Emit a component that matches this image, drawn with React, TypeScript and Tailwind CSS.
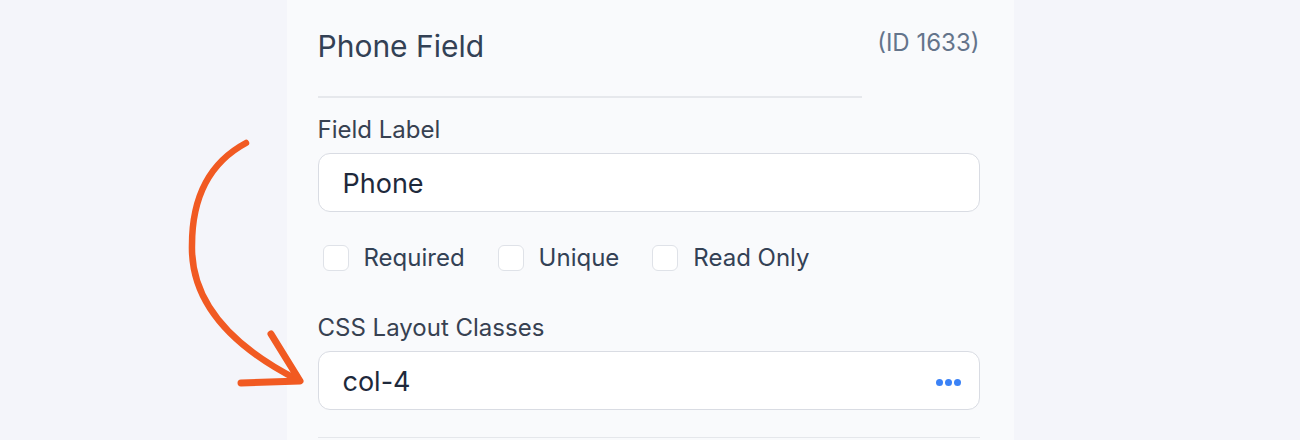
import React from 'react';

const Checkbox: React.FC<{ label: string }> = ({ label }) => (
    <label className="flex items-center gap-[15px]">
        <span className="h-[26px] w-[26px] rounded-[6px] border border-[#dfe2e8] bg-white" />
        <span className="text-[24px] leading-[28px] text-[#334155]">{label}</span>
    </label>
);

const Arrow: React.FC = () => (
    <svg className="absolute left-0 top-0" width="1300" height="440" viewBox="0 0 1300 440" fill="none">
        <path
            d="M246 143 Q192 172 192 245 Q190 325 298 380"
            stroke="#f15a22"
            strokeWidth="6.5"
            strokeLinecap="round"
        />
        <path
            d="M271 334 L300 381 L241 383"
            stroke="#f15a22"
            strokeWidth="7"
            strokeLinecap="round"
            strokeLinejoin="round"
        />
    </svg>
);

const App: React.FC = () => {
    return (
        <div className="relative h-[440px] w-full overflow-hidden bg-[#f4f5fa] font-['Inter',sans-serif]">
            <div className="mx-auto h-full w-[727px] bg-[#f9fafc] pl-[31px] pr-[34px] pt-[28px]">
                <div className="flex items-start justify-between">
                    <h2 className="text-[30px] leading-[36px] text-[#334155]">Phone Field</h2>
                    <span className="pt-[1px] text-[24px] leading-[28px] text-[#64748b]">(ID 1633)</span>
                </div>
                <div className="mt-[32px] h-[2px] w-[544px] bg-[#e6e8ec]" />

                <div className="mt-[18px] text-[24px] leading-[28px] text-[#374151]">Field Label</div>
                <div className="mt-[9px] flex h-[59px] items-center rounded-[12px] border border-[#d9dce3] bg-white px-[24px] pt-[3px]">
                    <span className="text-[27px] text-[#1e293b]">Phone</span>
                </div>

                <div className="mt-[32px] flex items-center gap-[33px] pl-[5px]">
                    <Checkbox label="Required" />
                    <Checkbox label="Unique" />
                    <Checkbox label="Read Only" />
                </div>

                <div className="mt-[42px] text-[24px] leading-[28px] text-[#374151]">CSS Layout Classes</div>
                <div className="mt-[9px] flex h-[59px] items-center justify-between rounded-[12px] border border-[#d9dce3] bg-white pl-[24px] pr-[18px] pt-[3px]">
                    <span className="text-[27px] text-[#1e293b]">col-4</span>
                    <span className="flex gap-[2px]">
                        <span className="h-[7px] w-[7px] rounded-full bg-[#3b82f6]" />
                        <span className="h-[7px] w-[7px] rounded-full bg-[#3b82f6]" />
                        <span className="h-[7px] w-[7px] rounded-full bg-[#3b82f6]" />
                    </span>
                </div>

                <div className="mt-[27px] h-px bg-[#e5e7eb]" />
            </div>
            <Arrow />
        </div>
    );
};

export default App;
